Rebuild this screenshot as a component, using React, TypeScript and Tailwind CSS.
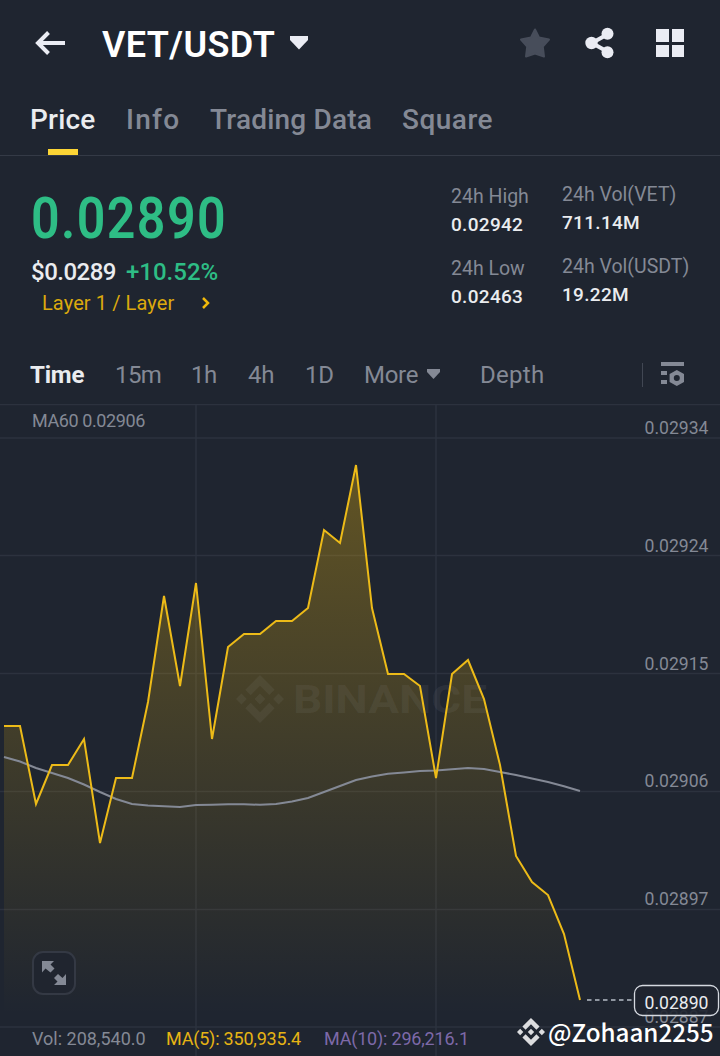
import React from "react";
import { SiBinance } from "react-icons/si";

const prices: [number, number][] = [
  [4, 726], [20, 726], [36, 804], [52, 765], [68, 765], [84, 739], [100, 843], [116, 778], [132, 778],
  [148, 702], [164, 596], [180, 686], [196, 583], [212, 739], [228, 647], [244, 634], [260, 634],
  [276, 621], [292, 621], [308, 608], [324, 530], [340, 543], [356, 465], [372, 608], [388, 674],
  [404, 674], [420, 686], [436, 778], [452, 674], [468, 660], [484, 699], [500, 765], [516, 856],
  [532, 882], [548, 895], [564, 934], [580, 1000],
];

const average: [number, number][] = [
  [4, 757], [20, 761.5], [36, 768], [52, 773], [68, 778], [84, 784.5], [100, 792], [116, 799], [132, 804],
  [148, 805.5], [164, 806.2], [180, 807], [196, 805], [212, 804.8], [228, 804.3], [244, 804.3], [260, 804.8],
  [276, 804], [292, 801.5], [308, 798], [324, 792], [340, 786], [356, 780], [372, 776.5], [388, 773.8],
  [404, 772.5], [420, 771], [436, 770.5], [452, 769.2], [468, 768], [484, 769], [500, 772], [516, 775],
  [532, 778.5], [548, 782], [564, 786.3], [580, 791],
];

const toPoints = (list: [number, number][]) => list.map((p) => p.join(",")).join(" ");

const axis: [string, number][] = [
  ["0.02934", 434], ["0.02924", 552], ["0.02915", 670], ["0.02906", 787], ["0.02897", 905], ["0.02887", 1023],
];

function Header() {
  return (
    <header className="flex h-[86px] items-center">
      <svg className="ml-[34px] h-6 w-8" viewBox="0 0 32 24" fill="none" stroke="#eaecf3" strokeWidth="4">
        <path d="M31 12H4M14.5 1.5 4 12l10.500 10.500" />
      </svg>
      <h1 className="ml-[36px] mt-[4px] w-[188px] whitespace-nowrap text-[36px] font-semibold leading-none tracking-[0.4px] text-white">
        VET/USDT
      </h1>
      <svg className="h-[14px] w-[18px]" viewBox="0 0 18 14" fill="#eaecf3">
        <path d="M0 0h18v4L9 13.500 0 4z" />
      </svg>
      <div className="ml-[211px] flex items-center">
        <svg className="h-8 w-8" viewBox="0 0 32 32" fill="#474d5a" stroke="#474d5a" strokeWidth="2" strokeLinejoin="round">
          <path d="M16 2.500 20 10.500 30 12.500 23.800 19.500 25 29.500 16 26.500 7 29.500 8.200 19.500 2 12.500 12 10.500z" />
        </svg>
        <svg className="ml-[34px] h-8 w-8" viewBox="0 0 32 32" fill="#eaecf3">
          <path d="M7 16 23 7M7 16l16 9" stroke="#eaecf3" strokeWidth="4" />
          <circle cx="6.500" cy="16" r="6.200" />
          <circle cx="22.500" cy="6.700" r="6" />
          <circle cx="22.500" cy="25.300" r="6" />
        </svg>
        <div className="ml-[39px] grid grid-cols-2 gap-[3px]">
          <i className="size-[12.500px] bg-[#eaecf3]" />
          <i className="size-[12.500px] bg-[#eaecf3]" />
          <i className="size-[12.500px] bg-[#eaecf3]" />
          <i className="size-[12.500px] bg-[#eaecf3]" />
        </div>
      </div>
    </header>
  );
}

function Tabs() {
  return (
    <nav className="flex h-[70px] border-b border-[#343a46] pl-[30px] text-[28px] font-medium leading-[68px] text-[#848995]">
      <div className="flex w-[96px] flex-col">
        <span className="h-[63px] tracking-[0.2px] text-[#eaecef]">Price</span>
        <i className="ml-[18px] h-[6px] w-[30px] bg-[#fcd535]" />
      </div>
      <span className="w-[84px] tracking-[1.300px]">Info</span>
      <span className="w-[192px] tracking-[0.2px]">Trading Data</span>
      <span className="tracking-[0.5px]">Square</span>
    </nav>
  );
}

function Stat({ label, value }: { label: string; value: string }) {
  return (
    <div className="h-[72px] whitespace-nowrap">
      <div className="text-[19.500px] leading-7 text-[#848995]">{label}</div>
      <div className="text-[19px] font-medium leading-7 tracking-[0.3px] text-[#eaecef]">{value}</div>
    </div>
  );
}

function Summary() {
  return (
    <section className="flex h-[189px]">
      <div className="w-[451px] pl-[31px] pt-[30px]">
        <div className="h-[70px] origin-left scale-x-[0.88] text-[57px] font-semibold leading-[66px] tracking-[1.600px] text-[#2ebd85]">
          0.02890
        </div>
        <div className="flex h-[32px] text-[24px] font-medium leading-[32px]">
          <span className="w-[95px] tracking-[-0.500px] text-[#eaecef]">$0.0289</span>
          <span className="text-[#2ebd85]">+10.52%</span>
        </div>
        <div className="flex h-[30px] items-center pl-[11px] text-[20px] text-[#dba90d]">
          <span className="w-[160px] tracking-[0.1px]">Layer 1 / Layer</span>
          <svg className="h-3 w-2" viewBox="0 0 8 12" fill="none" stroke="#f0b90b" strokeWidth="2.500">
            <path d="m1 1 5 5-5 5" />
          </svg>
        </div>
      </div>
      <div className="w-[111px] pt-[27px]">
        <Stat label="24h High" value="0.02942" />
        <Stat label="24h Low" value="0.02463" />
      </div>
      <div className="pt-[25px]">
        <Stat label="24h Vol(VET)" value="711.14M" />
        <Stat label="24h Vol(USDT)" value="19.22M" />
      </div>
    </section>
  );
}

function Intervals() {
  return (
    <nav className="flex h-[59px] items-center pl-[30px] text-[24px] text-[#848995]">
      <span className="w-[85px] font-bold tracking-[-0.2px] text-[#eaecef]">Time</span>
      <span className="w-[76px] tracking-[-0.600px]">15m</span>
      <span className="w-[57px] tracking-[-0.500px]">1h</span>
      <span className="w-[57px] tracking-[-0.2px]">4h</span>
      <span className="w-[59px] tracking-[-0.2px]">1D</span>
      <span className="w-[63px] tracking-[-0.3px]">More</span>
      <svg className="h-[11px] w-[13px]" viewBox="0 0 13 11" fill="#848995">
        <path d="M0 0h13v3L6.500 10 0 3z" />
      </svg>
      <span className="ml-[40px] w-[162px] tracking-[0.3px]">Depth</span>
      <i className="h-6 w-px bg-[#414753]" />
      <svg className="ml-[17px] mt-[-2px] h-6 w-6" viewBox="0 0 24 24" fill="#848995">
        <path d="M1 0h23v4H1zM1 9h6v4H1zM1 18h6v4H1z" />
        <path fillRule="evenodd" d="m16.800 8 7.200 4v8l-7.200 4-7.200-4v-8zM16.800 13a3 3 0 1 0 0 6 3 3 0 0 0 0-6z" />
      </svg>
    </nav>
  );
}

function Chart() {
  return (
    <section className="relative h-[652px]">
      <svg className="block h-[652px] w-[720px]" viewBox="0 404 720 652">
        <defs>
          <linearGradient id="area" gradientUnits="userSpaceOnUse" x1="0" y1="465" x2="0" y2="1015">
            <stop offset="0" stopColor="#f0b90b" stopOpacity="0.32" />
            <stop offset="1" stopColor="#f0b90b" stopOpacity="0" />
          </linearGradient>
        </defs>
        <path
          d="M0 404.500H720M0 438H720M0 555.500H720M0 673.500H720M0 791.500H720M0 909.500H720M0 1027H720M196 404V1056M436 404V1056"
          stroke="#2c323e"
          strokeWidth="1.500"
        />
        <polygon points={`4,1020 ${toPoints(prices)} 580,1020`} fill="url(#area)" />
        <polyline points={toPoints(average)} fill="none" stroke="#848995" strokeWidth="2" />
        <text x="293" y="713" fontSize="38" fontWeight="700" fill="#a0a0a0" fillOpacity="0.1" textLength="194" lengthAdjust="spacingAndGlyphs">
          BINANCE
        </text>
        <polyline points={toPoints(prices)} fill="none" stroke="#edbb18" strokeWidth="2" />
        <path d="M587 1000H632" stroke="#b7bdc6" strokeWidth="1.300" strokeDasharray="4.500 3.500" />
        <g fontSize="18" fill="#848995">
          {axis.map(([label, y]) => (
            <text key={label} x="644.500" y={y} textLength="64" lengthAdjust="spacingAndGlyphs">
              {label}
            </text>
          ))}
        </g>
        <rect x="634.500" y="985.500" width="84" height="30" rx="8" fill="#1f2530" fillOpacity="0.9" stroke="#d5d9e0" strokeWidth="1.300" />
        <text x="644.500" y="1009" fontSize="18" fill="#eaecef" textLength="64" lengthAdjust="spacingAndGlyphs">
          0.02890
        </text>
      </svg>
      <SiBinance className="absolute left-[236px] top-[271px] size-[48px] text-[#a0a0a0]/10" />
      <span className="absolute left-[32px] top-[5px] text-[18px] leading-6 tracking-[-0.400px] text-[#848995]">MA60 0.02906</span>
      <button className="absolute left-[32px] top-[547px] flex size-[44px] items-center justify-center rounded-[11px] border-2 border-[#343944] bg-[#20252f]">
        <svg className="size-[26px]" viewBox="0 0 26 26" fill="#848995">
          <path d="M1 1h12L9.500 4.500l4 4-4 4-5-4L1 12.500zM25 25H13l3.500-3.500-3.500-3.500 4-4 4.500 4 3.500-4z" />
        </svg>
      </button>
      <div className="absolute left-[32px] top-[623px] flex whitespace-nowrap text-[18px] leading-6">
        <span className="w-[134px] text-[#848995]">Vol: 208,540.0</span>
        <span className="w-[158px] tracking-[-0.2px] text-[#e6b414]">MA(5): 350,935.4</span>
        <span className="tracking-[-0.2px] text-[#7d69a8]">MA(10): 296,216.1</span>
      </div>
      <div className="absolute left-[517px] top-[612px] flex items-center whitespace-nowrap text-white">
        <SiBinance className="size-[28px] text-[#dcdddf]" />
        <span className="ml-[3px] font-['Noto_Sans_CJK_SC',sans-serif] text-[24.200px] font-medium leading-8">@Zohaan2255</span>
      </div>
    </section>
  );
}

export default function App() {
  return (
    <main className="h-[1056px] w-[720px] overflow-hidden bg-[#1f2530] font-[Roboto,sans-serif]">
      <Header />
      <Tabs />
      <Summary />
      <Intervals />
      <Chart />
    </main>
  );
}
